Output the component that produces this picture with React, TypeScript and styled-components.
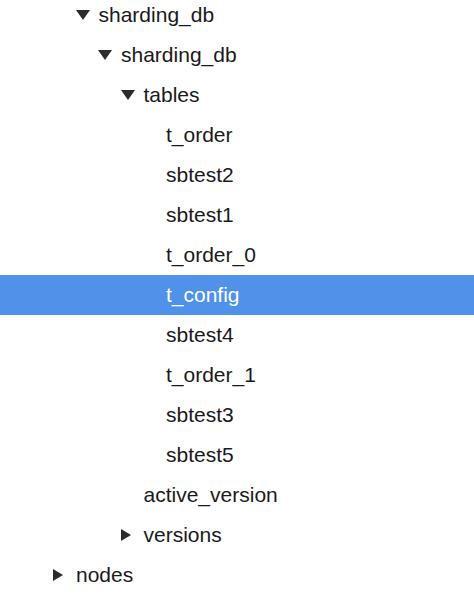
import React, { FC } from "react";
import styled, { createGlobalStyle } from "styled-components";

type TreeNode = {
    label: string;
    level: number;
    toggle?: "open" | "closed";
    selected?: boolean;
};

const nodes: TreeNode[] = [
    { label: "sharding_db", level: 1, toggle: "open" },
    { label: "sharding_db", level: 2, toggle: "open" },
    { label: "tables", level: 3, toggle: "open" },
    { label: "t_order", level: 4 },
    { label: "sbtest2", level: 4 },
    { label: "sbtest1", level: 4 },
    { label: "t_order_0", level: 4 },
    { label: "t_config", level: 4, selected: true },
    { label: "sbtest4", level: 4 },
    { label: "t_order_1", level: 4 },
    { label: "sbtest3", level: 4 },
    { label: "sbtest5", level: 4 },
    { label: "active_version", level: 3 },
    { label: "versions", level: 3, toggle: "closed" },
    { label: "nodes", level: 0, toggle: "closed" },
];

const Arrow: FC<{ open: boolean }> = ({ open }) =>
    open ? (
        <svg width="14" height="10" viewBox="0 0 14 10">
            <polygon points="0,0 14,0 7,10" fill="#2b2b2b" />
        </svg>
    ) : (
        <svg width="10" height="12" viewBox="0 0 10 12">
            <polygon points="0,0 10,6 0,12" fill="#2b2b2b" />
        </svg>
    );

export default function App() {
    return (
        <>
            <GlobalStyle />
            <Tree>
                {nodes.map((node, k) => (
                    <Row key={k} $level={node.level} $selected={!!node.selected}>
                        <Toggle>{node.toggle ? <Arrow open={node.toggle === "open"} /> : null}</Toggle>
                        <Label>{node.label}</Label>
                    </Row>
                ))}
            </Tree>
        </>
    );
}

const GlobalStyle = createGlobalStyle`
    html, body {
        margin: 0;
        padding: 0;
        background: #ffffff;
        overflow: hidden;
    }
`;

const Tree = styled.ul`
    list-style: none;
    margin: -5px 0 0;
    padding: 0;
    font-family: "Liberation Sans", Arial, sans-serif;
    font-size: 21px;
`;

const Row = styled.li<{ $level: number; $selected: boolean }>`
    display: flex;
    align-items: center;
    height: 40px;
    padding-left: ${({ $level }) => 53 + $level * 22.5}px;
    background: ${({ $selected }) => ($selected ? "#5092ea" : "transparent")};
    color: ${({ $selected }) => ($selected ? "#ffffff" : "#1a1a1a")};
`;

const Toggle = styled.span`
    display: flex;
    align-items: center;
    flex: 0 0 23px;
    height: 100%;
`;

const Label = styled.span`
    line-height: 40px;
    white-space: nowrap;
`;
